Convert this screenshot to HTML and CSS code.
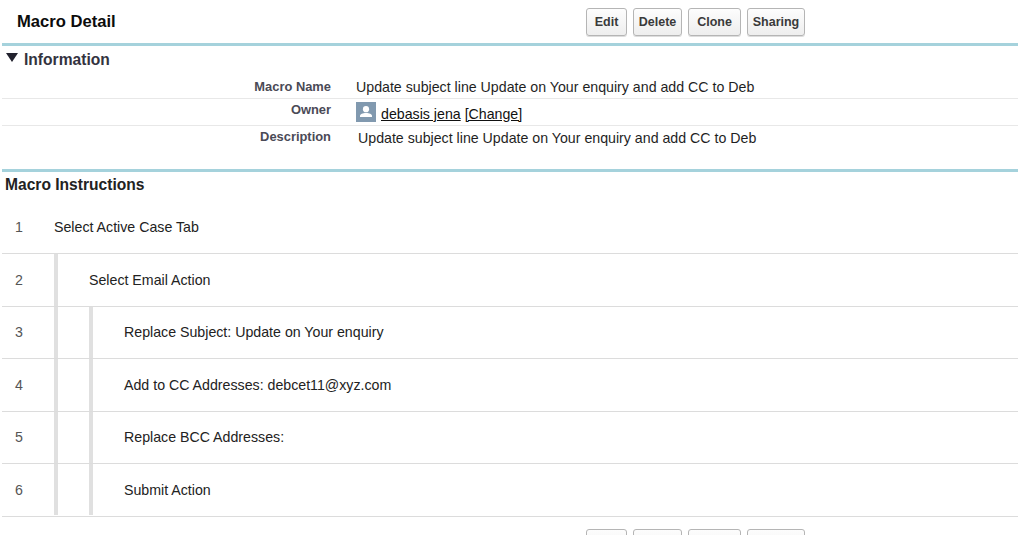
FILE: index.html
```html
<!DOCTYPE html>
<html lang="en">
<head>
<meta charset="utf-8">
<title>Macro Detail</title>
<link rel="stylesheet" href="styles.css">
</head>
<body>
<div class="page">
  <header class="topbar">
    <h1 class="title">Macro Detail</h1>
    <div class="buttons">
      <button class="btn btn-edit">Edit</button>
      <button class="btn btn-delete">Delete</button>
      <button class="btn btn-clone">Clone</button>
      <button class="btn btn-sharing">Sharing</button>
    </div>
  </header>
  <section class="info">
    <h2 class="info-head"><svg class="caret" width="12" height="10" viewBox="0 0 12 10"><path d="M0 1h12L6 10z" fill="#22222e"/></svg>Information</h2>
    <div class="field field-name">
      <div class="label">Macro Name</div>
      <div class="value">Update subject line Update on Your enquiry and add CC to Deb</div>
    </div>
    <div class="field field-owner">
      <div class="label">Owner</div>
      <div class="value">
        <span class="avatar"><svg width="20" height="20" viewBox="0 0 20 20"><circle cx="10" cy="7.2" r="3.1" fill="#fff"/><path d="M4 15v-1.2c0-1.600 2.600-2.800 6-2.800s6 1.200 6 2.800V15z" fill="#fff"/></svg></span>
        <span class="links"><a class="link" href="#">debasis jena</a> <a class="link" href="#">[Change]</a></span>
      </div>
    </div>
    <div class="field field-desc">
      <div class="label">Description</div>
      <div class="value">Update subject line Update on Your enquiry and add CC to Deb</div>
    </div>
  </section>
  <section class="instructions">
    <h2 class="inst-head">Macro Instructions</h2>
    <div class="step step-first"><span class="num">1</span><div class="body">Select Active Case Tab</div></div>
    <div class="step step-2"><span class="num">2</span><div class="indent"><div class="body">Select Email Action</div></div></div>
    <div class="step step-3"><span class="num">3</span><div class="indent"><div class="indent"><div class="body">Replace Subject: Update on Your enquiry</div></div></div></div>
    <div class="step step-4"><span class="num">4</span><div class="indent"><div class="indent"><div class="body">Add to CC Addresses: debcet11@xyz.com</div></div></div></div>
    <div class="step step-3"><span class="num">5</span><div class="indent"><div class="indent"><div class="body">Replace BCC Addresses:</div></div></div></div>
    <div class="step step-4 step-last"><span class="num">6</span><div class="indent"><div class="indent"><div class="body">Submit Action</div></div></div></div>
  </section>
  <div class="buttons buttons-bottom">
    <button class="btn btn-edit">Edit</button>
    <button class="btn btn-delete">Delete</button>
    <button class="btn btn-clone">Clone</button>
    <button class="btn btn-sharing">Sharing</button>
  </div>
</div>
</body>
</html>
```
FILE: styles.css
```css
html, body { margin: 0; padding: 0; background: #fff; }
body { height: 535px; overflow: hidden; font-family: "Liberation Sans", Arial, sans-serif; color: #1a1a1a; }
.page { padding-left: 2px; }

.topbar { height: 43px; display: flex; align-items: flex-start; border-bottom: 3px solid #a5d2dc; }
.title { margin: 12px 0 0 15px; width: 569px; font-size: 16.6px; line-height: 19px; font-weight: bold; color: #0c0c0c; }
.buttons { display: flex; gap: 6px; }
.topbar .buttons { margin-top: 8px; }
.btn { height: 28px; padding: 0; border: 1px solid #b5b5b5; border-radius: 3px; background: linear-gradient(#fdfdfd, #eeeeee); font: bold 12.5px "Liberation Sans", Arial, sans-serif; color: #3a3a3a; box-shadow: 0 1px 0 #ddd; }
.btn-edit { width: 41px; }
.btn-delete { width: 49px; }
.btn-clone { width: 53px; }
.btn-sharing { width: 58px; }
.buttons-bottom { margin: 12px 0 0 584px; }

.info { height: 123px; border-bottom: 3px solid #a5d2dc; }
.info-head { margin: 0; height: 27px; line-height: 27px; display: flex; align-items: center; font-size: 15.6px; font-weight: bold; color: #333340; }
.caret { margin: 0 6px 5px 4px; }
.field { display: flex; border-bottom: 1px solid #e8e8e8; }
.field-name { height: 25px; }
.field-owner { height: 26px; }
.field-desc { border-bottom: 0; }
.label { width: 329px; text-align: right; font-size: 12.9px; font-weight: bold; color: #4a4a56; line-height: 15px; padding-top: 6px; }
.value { margin-left: 25px; font-size: 14.2px; line-height: 16px; padding-top: 6px; color: #1f1f1f; }
.field-owner .label { padding-top: 3px; }
.field-owner .value { display: flex; align-items: flex-start; padding-top: 3px; }
.field-desc .value { margin-left: 27px; padding-top: 4px; }
.field-desc .label { padding-top: 3px; }
.avatar { width: 20px; height: 20px; margin: 0 5px 0 0; background: #8199af; display: block; }
.avatar svg { display: block; }
.links { margin-top: 4px; line-height: 16px; }
.link { color: #111; text-decoration: underline; }

.inst-head { margin: 0; height: 28px; padding: 3px 0 0 3px; box-sizing: border-box; font-size: 15.6px; line-height: 19px; font-weight: bold; color: #222; }
.step { display: flex; height: 53px; box-sizing: border-box; border-bottom: 1px solid #dcdcdc; }
.step-first { height: 54px; }
.step-3 { height: 52px; }
.step-last { padding-bottom: 1px; }
.num { width: 52px; flex: none; padding-left: 13px; box-sizing: border-box; font-size: 14.2px; line-height: 16px; padding-top: 18px; color: #555; }
.step-first .num { padding-top: 19px; }
.indent { border-left: 4px solid #e0e0e0; flex: 1; padding-left: 31px; display: flex; }
.body { font-size: 14.2px; line-height: 16px; padding-top: 18px; color: #222; }
.step-first .body { padding-top: 19px; }
.step-3 .body, .step-3 .num { padding-top: 17px; }
```
